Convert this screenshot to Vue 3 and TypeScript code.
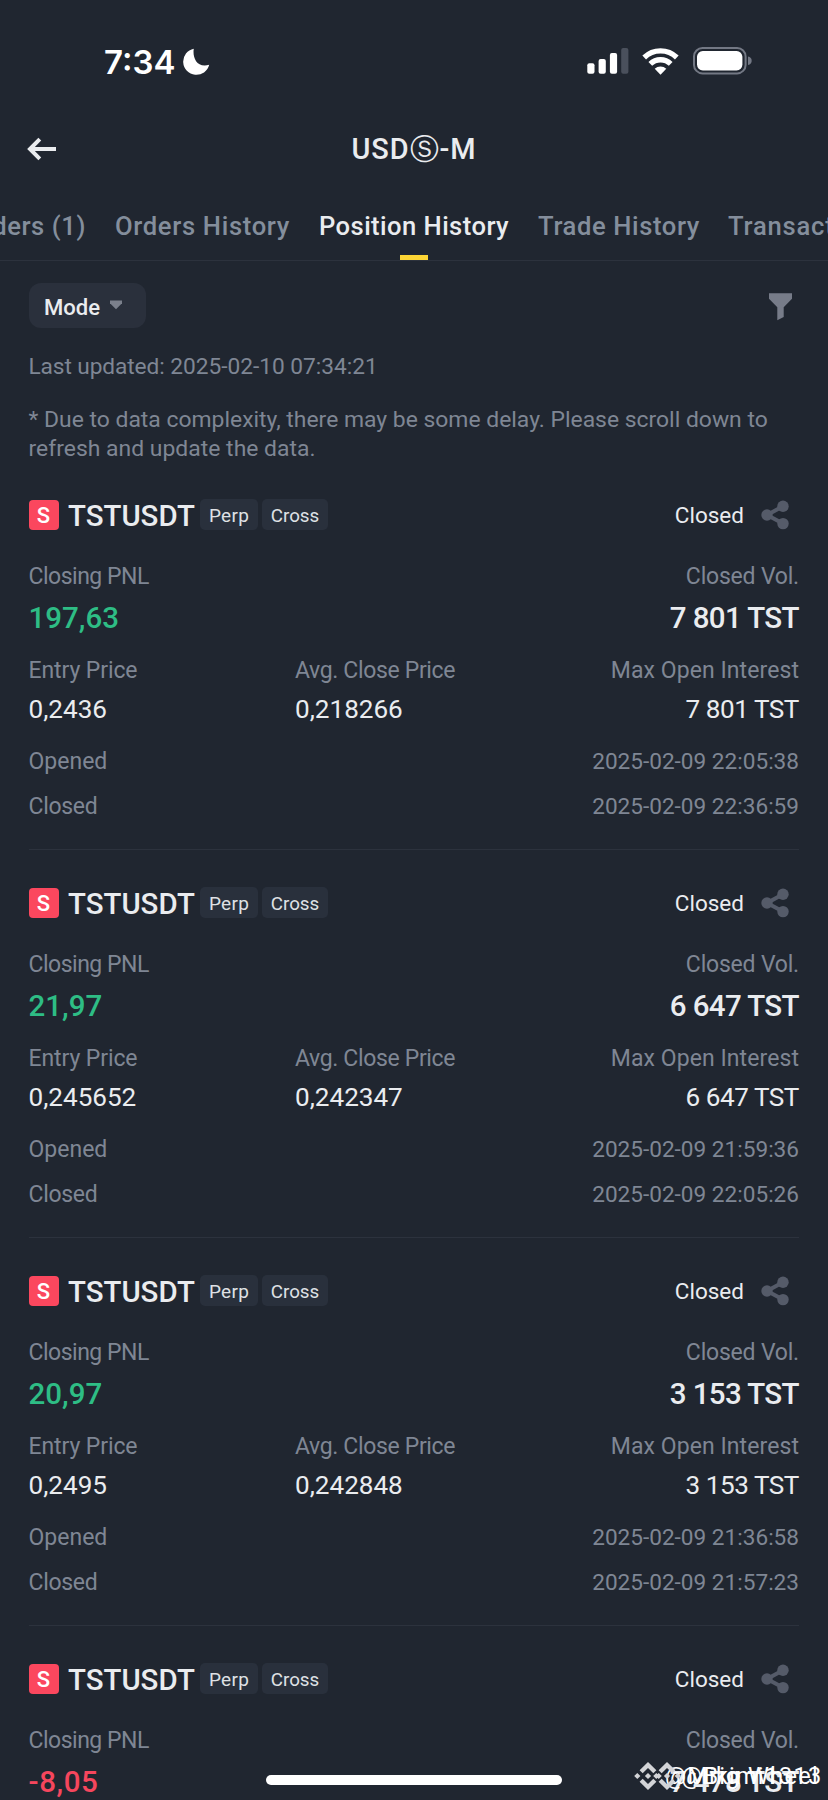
<script setup lang="ts">
interface Position {
  pnl: string
  volume: string
  entry: string
  close: string
  opened: string
  closed: string
}

const tabs: string[] = ['Orders (1)', 'Orders History', 'Position History', 'Trade History', 'Transaction History']

const positions: Position[] = [
  { pnl: '197,63', volume: '7 801', entry: '0,2436', close: '0,218266', opened: '2025-02-09 22:05:38', closed: '2025-02-09 22:36:59' },
  { pnl: '21,97', volume: '6 647', entry: '0,245652', close: '0,242347', opened: '2025-02-09 21:59:36', closed: '2025-02-09 22:05:26' },
  { pnl: '20,97', volume: '3 153', entry: '0,2495', close: '0,242848', opened: '2025-02-09 21:36:58', closed: '2025-02-09 21:57:23' },
  { pnl: '-8,05', volume: '7 478', entry: '', close: '', opened: '', closed: '' },
]
</script>

<template>
  <main class="screen">
    <div class="status">
      <span class="clock">7:34</span>
      <svg class="moon" width="27" height="27" viewBox="0 0 27 27"><path d="M10.8.7C9.4 8.6 13.2 20.3 26.2 16.8A13.2 13.2 0 1 1 10.8.7Z" fill="#fff" /></svg>
      <svg class="signal" width="42" height="26" viewBox="0 0 42 26" fill="#fff">
        <rect x="0.3" y="15.2" width="7.2" height="10.6" rx="2" />
        <rect x="11.6" y="11" width="7.2" height="14.8" rx="2" />
        <rect x="22.9" y="5" width="7.2" height="20.8" rx="2" />
        <rect x="34.2" y="0" width="7.2" height="25.8" rx="2" fill="#4a505c" />
      </svg>
      <svg class="wifi" width="37" height="27" viewBox="0 0 37 27">
        <g fill="none" stroke="#fff" stroke-width="5.3">
          <path d="M2.2 9.5A23.4 23.4 0 0 1 34.8 9.5" />
          <path d="M8.3 15.9A14.6 14.6 0 0 1 28.7 15.9" />
        </g>
        <path d="M12.7 20.8A8.5 8.5 0 0 1 24.3 20.8L18.5 26.8Z" fill="#fff" />
      </svg>
      <svg class="battery" width="60" height="28" viewBox="0 0 60 28">
        <rect x="1" y="1" width="51.6" height="25.4" rx="8.5" fill="none" stroke="#737884" stroke-width="2" />
        <rect x="4" y="4" width="45.4" height="19.4" rx="5.8" fill="#fff" />
        <path d="M55 9.5Q58.7 10.2 58.7 13.7T55 17.9Z" fill="#737884" />
      </svg>
    </div>

    <header class="header">
      <svg class="back" width="30" height="24" viewBox="0 0 30 24" fill="none" stroke="#eaecef" stroke-width="4"><path d="M29 12H4M12.8 2.2 3 12l9.8 9.8" /></svg>
      <h1>USD<span class="coin">Ⓢ</span>-M</h1>
    </header>

    <nav class="tabs">
      <span v-for="(tab, i) in tabs" :key="tab" class="tab" :class="['tab-' + i, { active: i === 2 }]">{{ tab }}</span>
    </nav>

    <div class="filters">
      <div class="mode">Mode<svg width="12" height="10" viewBox="0 0 12 10"><path d="M0 .5h12v2.8L6 9.3 0 3.3Z" fill="#7b808c" /></svg></div>
      <svg class="funnel" width="23" height="28" viewBox="0 0 23 28"><path d="M0 .3h23v5.4l-8.3 8.6v9.8L8.3 27.3v-13L0 5.7Z" fill="#777c89" /></svg>
    </div>

    <p class="updated"><span class="updated-label">Last updated: </span>2025-02-10 07:34:21</p>
    <p class="notice">* Due to data complexity, there may be some delay. Please scroll down to<br /><span class="second">refresh and update the data.</span></p>

    <section v-for="(p, i) in positions" :key="i" class="card">
      <div class="top">
        <span class="side">S</span>
        <span class="symbol">TSTUSDT</span>
        <span class="chip perp">Perp</span>
        <span class="chip cross">Cross</span>
        <span class="state">Closed</span>
        <svg class="share" width="29" height="30" viewBox="0 0 29 30" fill="#555b69"><path d="M22 6.3 6 15l16 8.6" fill="none" stroke="#555b69" stroke-width="4" /><circle cx="6" cy="15" r="5.7" /><circle cx="22" cy="6.3" r="5.7" /><circle cx="22" cy="23.6" r="5.7" /></svg>
      </div>
      <div class="row label totals"><span class="closing">Closing PNL</span><span class="vol-label">Closed Vol.</span></div>
      <div class="row big"><span class="pnl" :class="{ loss: p.pnl.startsWith('-') }">{{ p.pnl }}</span><span class="vol">{{ p.volume }} TST</span></div>
      <template v-if="p.entry">
        <div class="cols label prices"><span class="entry">Entry Price</span><span class="avg">Avg. Close Price</span><span class="interest">Max Open Interest</span></div>
        <div class="cols value"><span>{{ p.entry }}</span><span>{{ p.close }}</span><span class="qty">{{ p.volume }} TST</span></div>
        <div class="row label opened"><span>Opened</span><span class="date">{{ p.opened }}</span></div>
        <div class="row label closed"><span class="closed-label">Closed</span><span class="date">{{ p.closed }}</span></div>
      </template>
    </section>

    <div class="home"></div>
    <div v-for="n in 2" :key="n" class="mark" :class="'mark-' + n">
      <svg width="28" height="28" viewBox="0 0 28 28" fill="#d3d4d7">
        <path d="M14 0 22.4 8.2 19.3 11.3 14 6.1 8.7 11.3 5.6 8.2ZM14 28 22.4 19.8 19.3 16.7 14 21.9 8.7 16.7 5.6 19.8ZM14 10.9 17.1 14 14 17.1 10.9 14ZM3.3 10.9 6.4 14 3.3 17.1.2 14ZM24.7 10.9 27.8 14 24.7 17.1 21.6 14Z" />
      </svg>
      <span>{{ n === 1 ? '@Mikimi1313' : '@Big Wheel' }}</span>
    </div>
  </main>
</template>

<style>
body { background: #202630; }
</style>

<style scoped>
.screen { position: relative; width: 828px; height: 1800px; overflow: hidden; background: #202630; color: #eaecef; font-family: Roboto, "Noto Sans", sans-serif; }
svg { display: block; flex: none; }
p, h1 { margin: 0; }
.status { display: flex; align-items: center; height: 122px; padding: 0 76px 0 104px; }
.clock { width: 79px; padding-top: 1px; font: 600 33px/40px Inter, sans-serif; color: #fff; white-space: nowrap; }
.moon { margin-top: 1px; }
.signal { margin-left: auto; }
.wifi { margin-left: 13px; }
.battery { margin-left: 14px; margin-right: -1px; }
.header { display: grid; grid-template-columns: 60px 1fr 60px; align-items: center; height: 54px; padding: 0 27px; }
h1 { font-size: 28.9px; line-height: 40px; font-weight: 500; text-align: center; letter-spacing: 1px; }
.coin { letter-spacing: .8px; }
.tabs { display: flex; align-items: stretch; height: 84px; border-bottom: 1px solid #2c323d; color: #848e9c; font-size: 25.6px; font-weight: 500; line-height: 101px; white-space: nowrap; letter-spacing: .6px; }
.tab { display: flex; justify-content: center; flex: none; }
.tab-0 { width: 145px; margin-left: -59px; justify-content: flex-end; }
.tab-1 { width: 176px; margin-left: 28.5px; letter-spacing: .68px; }
.tab-2 { width: 190px; margin-left: 28.5px; letter-spacing: .45px; }
.tab-3 { width: 162px; margin-left: 29px; }
.tab-4 { margin-left: 28px; letter-spacing: .8px; }
.active { position: relative; color: #eaecef; }
.active::after { content: ""; position: absolute; left: 81px; bottom: 0; width: 28px; height: 5px; background: #fcd535; }
.filters { display: flex; align-items: center; justify-content: space-between; height: 45px; margin-top: 22px; padding: 0 36px 0 29px; }
.mode { display: flex; align-items: center; gap: 10px; box-sizing: border-box; width: 117px; height: 45px; padding: 2px 0 0 15px; border-radius: 12px; background: #2a303c; font-size: 22.1px; font-weight: 500; }
.mode svg { margin-top: -3px; }
.funnel { margin-top: 2px; }
.updated { margin: 25px 0 0 28.5px; color: #7f8694; font-size: 22.7px; line-height: 28px; white-space: nowrap; }
.updated-label { letter-spacing: -.1px; }
.notice { margin: 24px 0 0 28.5px; color: #7f8694; font-size: 22.9px; line-height: 29px; white-space: nowrap; }
.second { letter-spacing: .02px; }
.card { height: 350px; margin: 0 29px 37px; border-bottom: 1px solid #2c323d; white-space: nowrap; }
.notice + .card { margin-top: 36px; }
.top { display: flex; align-items: center; height: 31px; }
.side { width: 30px; height: 30px; margin-left: -.5px; border-radius: 4px; background: #fb475e; color: #fff; font-size: 22px; font-weight: 500; line-height: 32px; text-align: center; }
.symbol { width: 131px; margin-left: 9.5px; padding-top: 2px; font-size: 29.4px; font-weight: 500; line-height: 34px; }
.chip { height: 31px; border-radius: 5px; background: #29303c; color: #dfe1e5; font-size: 19px; line-height: 33px; text-align: center; }
.perp { width: 58px; margin-left: 1px; letter-spacing: .3px; }
.cross { width: 66px; margin-left: 4px; font-size: 18.8px; line-height: 34px; }
.state { margin-left: auto; margin-right: 17px; font-size: 22.5px; line-height: 31px; padding-top: 2px; }
.share { margin-right: 9px; }
.row { display: flex; justify-content: space-between; }
.label { color: #7f8694; font-size: 23px; line-height: 28px; }
.row > :first-child, .cols > :first-child { margin-left: -.5px; }
.totals { margin-top: 33px; }
.closing { letter-spacing: -.5px; }
.vol-label { letter-spacing: -.2px; }
.big { margin-top: 9.5px; font-size: 29.5px; font-weight: 500; line-height: 34px; }
.pnl { color: #2ebd85; }
.loss { color: #f6465d; letter-spacing: .6px; }
.vol { letter-spacing: -.6px; }
.cols { display: grid; grid-template-columns: 266px 1fr auto; }
.prices { margin-top: 22.5px; }
.entry { letter-spacing: -.1px; }
.avg { letter-spacing: -.35px; }
.interest { letter-spacing: .08px; }
.value { margin-top: 9px; font-size: 26.1px; line-height: 30px; }
.qty { letter-spacing: -.45px; }
.opened { margin-top: 24px; }
.closed { margin-top: 17px; }
.closed-label { letter-spacing: -.3px; }
.date { font-size: 22.6px; }
.home { position: absolute; left: 266px; top: 1775px; width: 296px; height: 10px; border-radius: 5px; background: #fff; }
.mark { position: absolute; top: 1761px; display: flex; align-items: center; color: #fff; font-size: 23.5px; line-height: 30px; white-space: nowrap; }
.mark-1 { left: 634px; }
.mark-2 { left: 653px; }
.mark-1 span { margin-left: 3px; letter-spacing: 1.2px; }
.mark-2 span { margin-left: 0; letter-spacing: 1.3px; }
</style>
